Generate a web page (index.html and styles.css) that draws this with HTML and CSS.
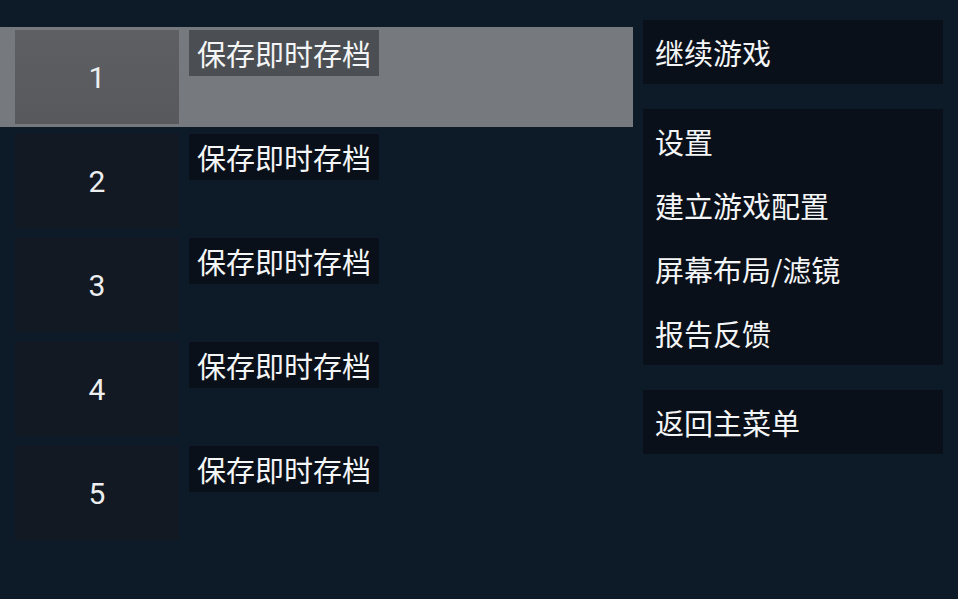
FILE: index.html
```html
<!DOCTYPE html>
<html lang="zh-CN">
<head>
<meta charset="utf-8">
<title>Quick Menu</title>
<link rel="stylesheet" href="styles.css">
</head>
<body>
<div class="screen">
  <div class="slots">
    <div class="slot selected">
      <div class="thumb">1</div>
      <div class="label">保存即时存档</div>
    </div>
    <div class="slot">
      <div class="thumb">2</div>
      <div class="label">保存即时存档</div>
    </div>
    <div class="slot">
      <div class="thumb">3</div>
      <div class="label">保存即时存档</div>
    </div>
    <div class="slot">
      <div class="thumb">4</div>
      <div class="label">保存即时存档</div>
    </div>
    <div class="slot">
      <div class="thumb">5</div>
      <div class="label">保存即时存档</div>
    </div>
  </div>
  <div class="menu">
    <div class="group">
      <div class="item">继续游戏</div>
    </div>
    <div class="group">
      <div class="item">设置</div>
      <div class="item">建立游戏配置</div>
      <div class="item">屏幕布局/滤镜</div>
      <div class="item">报告反馈</div>
    </div>
    <div class="group">
      <div class="item">返回主菜单</div>
    </div>
  </div>
</div>
</body>
</html>
```
FILE: styles.css
```css
html, body {
  margin: 0;
  padding: 0;
  background: #0d1a27;
  height: 100%;
}
body {
  font-family: "Noto Sans CJK SC", "Noto Sans", sans-serif;
  color: #f4f5f6;
  overflow: hidden;
}
.screen {
  display: flex;
  width: 958px;
  height: 599px;
}
.slots {
  width: 633px;
  padding-top: 27px;
  display: flex;
  flex-direction: column;
  gap: 4px;
}
.slot {
  height: 100px;
  box-sizing: border-box;
  padding: 3px 0 3px 15px;
  display: flex;
  gap: 10px;
}
.slot.selected {
  background: #76797d;
}
.thumb {
  width: 164px;
  height: 94px;
  background: #131922;
  display: flex;
  align-items: center;
  justify-content: center;
  font-family: Roboto, "Liberation Sans", sans-serif;
  font-size: 30px;
  color: #eceef0;
}
.selected .thumb {
  background: linear-gradient(#5e5f63, #57595d);
}
.label {
  align-self: flex-start;
  height: 46px;
  line-height: 46px;
  padding: 0 8px;
  font-size: 29px;
  background: #0a1019;
  white-space: nowrap;
}
.selected .label {
  background: #4b4f53;
}
.menu {
  width: 300px;
  margin-left: 10px;
  padding-top: 20px;
  display: flex;
  flex-direction: column;
  gap: 25px;
}
.group {
  background: #0a1019;
}
.item {
  height: 64px;
  line-height: 64px;
  padding-left: 12px;
  font-size: 29px;
  white-space: nowrap;
}
```
